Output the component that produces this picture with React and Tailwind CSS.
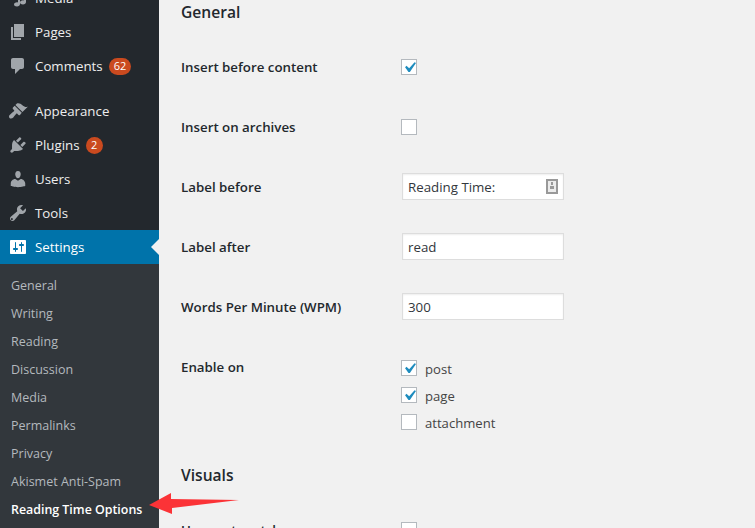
import React from "react";

const font = "font-['Open_Sans','Noto_Sans',sans-serif]";

const iconPaths = {
  media: "M12 2l6-1v13c0 1.4-1.3 2.5-3 2.5s-3-.8-3-2 1.3-2.2 3-2.2c.4 0 .7 0 1 .1V5l-4 .8V16c0 1.4-1.3 2.5-3 2.5S6 17.7 6 16.5s1.3-2.2 3-2.2c.4 0 .7 0 1 .1V3z",
  pages: "M6 15V2h10v13H6zm-1 1h8v2H3V5h2v11z",
  comments: "M5 2h9c1.1 0 2 .9 2 2v7c0 1.1-.9 2-2 2h-2l-5 5v-5H5c-1.1 0-2-.9-2-2V4c0-1.1.9-2 2-2z",
  appearance: "M14.48 11.06L7.41 3.99l1.5-1.5c.5-.56 2.3-.47 3.51.32 1.21.8 1.43 1.28 2.91 2.1 1.18.64 2.45 1.26 4.45.85zm-.71.71L6.7 4.7 4.93 6.47c-.39.39-.39 1.02 0 1.41l1.06 1.06c.39.39.39 1.03 0 1.42-.6.6-1.43 1.11-2.21 1.69-.35.26-.7.53-1.01.84C1.43 13.71 1 14.65 1 15.5c0 .52.16 1.02.53 1.38.36.37.86.53 1.38.53.85 0 1.79-.43 2.63-1.28.31-.31.58-.66.84-1.01.58-.78 1.09-1.61 1.69-2.21.39-.39 1.03-.39 1.42 0l1.06 1.06c.39.39 1.02.39 1.41 0z",
  plugins: "M13.11 4.36L9.87 7.6 8 5.73l3.24-3.24c.35-.34 1.05-.2 1.56.32.52.51.66 1.21.31 1.55zm-8 1.77l.91-1.12 9.01 9.01-1.19.84c-.71.71-2.63 1.16-3.82 1.16H6.14L4.9 17.26c-.59.59-1.54.59-2.12 0-.59-.58-.59-1.53 0-2.12l1.24-1.24v-3.88c0-1.13.4-3.19 1.09-3.89zm7.26 3.97l3.24-3.24c.34-.35 1.04-.21 1.55.31.52.51.66 1.21.31 1.55l-3.24 3.25z",
  users: "M10 9.25c-2.27 0-2.73-3.44-2.73-3.44C7 4.02 7.82 2 9.97 2c2.16 0 2.98 2.02 2.71 3.81 0 0-.41 3.44-2.68 3.44zm0 2.57L12.72 10c2.39 0 4.52 2.33 4.52 4.53v2.49s-3.65 1.13-7.24 1.13c-3.65 0-7.24-1.13-7.24-1.13v-2.49c0-2.25 1.94-4.48 4.47-4.48z",
  tools: "M16.68 9.77c-1.34 1.34-3.3 1.67-4.95.99l-5.41 6.52c-.99.99-2.59.99-3.55 0-.99-.97-.99-2.57 0-3.55l6.52-5.41c-.68-1.65-.35-3.61.99-4.95 1.28-1.28 3.12-1.62 4.72-1.06l-2.89 2.89 2.82 2.82 2.86-2.87c.53 1.58.18 3.37-1.11 4.62zM3.18 16.82c.39.39 1.03.39 1.42 0 .38-.39.38-1.03 0-1.42-.39-.38-1.03-.38-1.42 0-.38.39-.38 1.03 0 1.42z",
  settings: "M18 16V4c0-.55-.45-1-1-1H3c-.55 0-1 .45-1 1v12c0 .55.45 1 1 1h14c.55 0 1-.45 1-1zM8 11h1c.55 0 1 .45 1 1s-.45 1-1 1H8v1.5c0 .28-.22.5-.5.5s-.5-.22-.5-.5V13H6c-.55 0-1-.45-1-1s.45-1 1-1h1V5.5c0-.28.22-.5.5-.5s.5.22.5.5V11zm5-2h-1c-.55 0-1-.45-1-1s.45-1 1-1h1V5.5c0-.28.22-.5.5-.5s.5.22.5.5V7h1c.55 0 1 .45 1 1s-.45 1-1 1h-1v5.5c0 .28-.22.5-.5.5s-.5-.22-.5-.5V9z",
};

function MenuItem({ icon, label, badge, active }) {
  return (
    <div className={"relative flex h-[34px] items-center " + (active ? "bg-[#0073aa] text-white" : "text-[#eeeeee]")}>
      <div className="flex w-[35px] justify-center pl-[1px]">
        <svg viewBox="0 0 20 20" className={"h-5 w-5 " + (active ? "fill-white" : "fill-[#a0a5aa]")}>
          <path d={iconPaths[icon]} />
        </svg>
      </div>
      <span className="pt-[2px] text-[13.3px]">{label}</span>
      {badge ? (
        <span className="ml-[6px] flex h-[17px] min-w-[17px] items-center justify-center rounded-full bg-[#ca4a1f] px-[5px] text-[11px] text-white">
          {badge}
        </span>
      ) : null}
      {active ? (
        <span className="absolute right-0 top-[9px] h-0 w-0 border-y-[8px] border-r-[8px] border-y-transparent border-r-[#f1f1f1]" />
      ) : null}
    </div>
  );
}

function Sidebar() {
  const sub = ["General", "Writing", "Reading", "Discussion", "Media", "Permalinks", "Privacy", "Akismet Anti-Spam"];
  return (
    <aside className="w-[159px] shrink-0 bg-[#23282d]">
      <div className="-mt-[19px]">
        <MenuItem icon="media" label="Media" />
        <MenuItem icon="pages" label="Pages" />
        <MenuItem icon="comments" label="Comments" badge="62" />
      </div>
      <div className="mt-[11px]">
        <MenuItem icon="appearance" label="Appearance" />
        <MenuItem icon="plugins" label="Plugins" badge="2" />
        <MenuItem icon="users" label="Users" />
        <MenuItem icon="tools" label="Tools" />
        <MenuItem icon="settings" label="Settings" active />
      </div>
      <div className="bg-[#32373c] pb-[5px] pt-[7px] text-[12.5px] text-[#b4b9be]">
        {sub.map((s) => (
          <div key={s} className="flex h-[28px] items-center pl-[11px] pt-[2px]">{s}</div>
        ))}
        <div className="flex h-[28px] items-center pl-[11px] pt-[2px] text-[12.4px] font-semibold text-white">Reading Time Options</div>
      </div>
    </aside>
  );
}

function Checkbox({ checked }) {
  return (
    <span className="flex h-[16px] w-[16px] shrink-0 items-center justify-center border border-[#b4b9be] bg-white">
      {checked ? (
        <svg viewBox="0 0 20 20" className="h-[21px] w-[21px] shrink-0 fill-[#1e8cbe]">
          <path d="M14.83 4.89l1.34.94-5.81 8.38H9.02L5.78 9.67l1.34-1.25 2.57 2.4z" />
        </svg>
      ) : null}
    </span>
  );
}

function TextInput({ value, icon }) {
  return (
    <div className="mb-[1px] ml-[1px] flex h-[27px] w-[162px] items-center justify-between border border-[#dddddd] bg-white pl-[5px] pr-[5px] text-[13.3px] text-[#32373c] shadow-[inset_0_1px_2px_rgba(0,0,0,0.07)]">
      <span className="pt-[2px]">{value}</span>
      {icon ? (
        <svg viewBox="0 0 12 15" className="h-[15px] w-[12px]">
          <path fill="#999999" d="M0 0h12v15H0z" />
          <path fill="#ececec" d="M2 2h8v11H2z" />
          <path fill="#999999" d="M5 3h2v3H5zM4 7h4v3H4z" />
        </svg>
      ) : null}
    </div>
  );
}

function Row({ label, children }) {
  return (
    <div className="flex h-[60px] items-center">
      <div className="w-[220px] pt-[2px] text-[13.3px] font-semibold text-[#23282d]">{label}</div>
      {children}
    </div>
  );
}

export default function App() {
  return (
    <div className={"relative flex h-[528px] w-[755px] overflow-hidden bg-[#f1f1f1] " + font}>
      <Sidebar />
      <main className="flex-1 pl-[22px]">
        <h2 className="flex h-[24px] items-center pt-[2px] text-[15.6px] font-semibold text-[#23282d]">General</h2>
        <div className="mt-[13px]">
          <Row label="Insert before content"><Checkbox checked /></Row>
          <Row label="Insert on archives"><Checkbox /></Row>
          <Row label="Label before"><TextInput value="Reading Time:" icon /></Row>
          <Row label="Label after"><TextInput value="read" /></Row>
          <Row label="Words Per Minute (WPM)"><TextInput value="300" /></Row>
        </div>
        <div className="flex pt-[20px]">
          <div className="w-[220px] text-[13.3px] font-semibold leading-[20px] text-[#23282d]">Enable on</div>
          <div className="flex flex-col gap-[11px] pt-[3px] text-[13.1px] text-[#444444]">
            {[["post", true], ["page", true], ["attachment", false]].map(([name, on]) => (
              <label key={name} className="flex h-[16px] items-center gap-[8px]">
                <Checkbox checked={on} />
                <span className="pt-[3px]">{name}</span>
              </label>
            ))}
          </div>
        </div>
        <h2 className="mt-[33px] flex h-[24px] items-center pt-[2px] text-[15.6px] font-semibold text-[#23282d]">Visuals</h2>
        <div className="mt-[33px] flex items-start">
          <div className="w-[220px] text-[13.3px] font-semibold leading-[20px] text-[#23282d]">Use post match</div>
          <span className="mt-[2px]"><Checkbox /></span>
        </div>
      </main>
      <svg viewBox="0 0 110 40" className="absolute left-[140px] top-[485px] h-[40px] w-[110px]">
        <path fill="#fb3337" d="M9 20 L31 8 L31 14 L99 15 L32 23 L32 29 Z" />
      </svg>
    </div>
  );
}
